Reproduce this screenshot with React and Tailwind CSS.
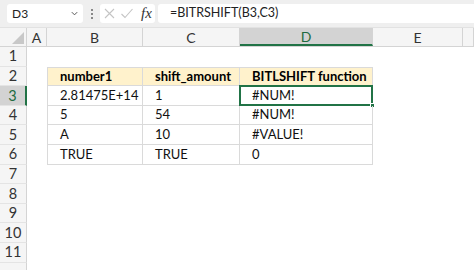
import React from 'react';

const cols = [
  { key: 'A', w: 'w-[20px]' },
  { key: 'B', w: 'w-[96px]' },
  { key: 'C', w: 'w-[97px]' },
  { key: 'D', w: 'w-[133px]' },
  { key: 'E', w: 'w-[90px]' },
  { key: 'F', w: 'flex-1' },
];

const table = [
  ['number1', 'shift_amount', 'BITLSHIFT function'],
  ['2.81475E+14', '1', '#NUM!'],
  ['5', '54', '#NUM!'],
  ['A', '10', '#VALUE!'],
  ['TRUE', 'TRUE', '0'],
];

function FormulaBar() {
  return (
    <div className="h-[28px] bg-[#efefef] flex items-center pl-[7px] border-b border-[#e2e2e2]">
      <div className="w-[76px] h-[19px] bg-white rounded-[3px] flex items-center justify-between pl-[5px] pr-[4px] text-[12px] text-[#222]">
        <span>D3</span>
        <svg width="9" height="9" viewBox="0 0 10 10">
          <path d="M2 3.5 L5 6.5 L8 3.5" fill="none" stroke="#555" strokeWidth="1.1" />
        </svg>
      </div>
      <div className="w-[17px] flex flex-col items-center justify-center gap-[2px]">
        <span className="w-[2px] h-[2px] bg-[#666] rounded-full"></span>
        <span className="w-[2px] h-[2px] bg-[#666] rounded-full"></span>
        <span className="w-[2px] h-[2px] bg-[#666] rounded-full"></span>
      </div>
      <div className="w-[55px] h-[19px] bg-white rounded-[3px] flex items-center pl-[3px] gap-[4px]">
        <svg width="13" height="13" viewBox="0 0 13 13">
          <path d="M2 2 L11 11 M11 2 L2 11" stroke="#c4c4c4" strokeWidth="1.1" fill="none" />
        </svg>
        <svg width="14" height="13" viewBox="0 0 14 13">
          <path d="M1.5 7 L5 10.5 L12.5 2" stroke="#c4c4c4" strokeWidth="1.1" fill="none" />
        </svg>
        <span className="ml-[3px] text-[15px] italic text-[#333]" style={{ fontFamily: '"Liberation Serif", serif' }}>fx</span>
      </div>
      <div className="ml-[3px] flex-1 h-[19px] bg-white rounded-l-[3px] flex items-center pl-[12px] text-[12.5px] text-[#222]">
        =BITRSHIFT(B3,C3)
      </div>
    </div>
  );
}

function ColHeader() {
  return (
    <div className="flex h-[19px] bg-[#f5f5f5] border-b border-[#d4d4d4]">
      <div className="w-[27px] border-r border-[#d4d4d4] flex items-end justify-end pr-[2px] pb-[2px]">
        <svg width="12" height="12" viewBox="0 0 12 12">
          <path d="M12 0 L12 12 L0 12 Z" fill="#c8c8c8" />
        </svg>
      </div>
      {cols.map((c) => (
        <div
          key={c.key}
          className={`${c.w} flex items-center justify-center border-r border-[#d4d4d4] text-[14px] ${
            c.key === 'D' ? 'bg-[#d3d3d3] text-[#1e6b40] border-b-2 border-b-[#217346]' : 'text-[#333]'
          }`}
        >
          {c.key === 'F' ? '' : c.key}
        </div>
      ))}
    </div>
  );
}

function Row({ n }) {
  const tableRow = n >= 2 && n <= 6 ? table[n - 2] : null;
  const isHead = n === 2;
  return (
    <div className="flex h-[19.6px]">
      <div
        className={`w-[27px] shrink-0 flex items-center justify-center text-[14.5px] border-r ${
          n === 3
            ? 'bg-[#d3d3d3] text-[#1e6b40] border-r-2 border-r-[#217346]'
            : 'bg-[#f5f5f5] text-[#333] border-[#d4d4d4]'
        } border-b border-b-[#e4e4e4]`}
      >
        {n <= 11 ? n : ''}
      </div>
      <div className="w-[20px] shrink-0"></div>
      {tableRow ? (
        tableRow.map((v, i) => (
          <div
            key={i}
            className={`${['w-[96px]', 'w-[97px]', 'w-[133px]'][i]} shrink-0 relative flex items-center pl-[12px] text-[13px] whitespace-nowrap border-r border-b border-[#dadada] ${
              i === 0 ? 'border-l' : ''
            } ${isHead ? 'border-t bg-[#fff2cc] font-bold text-black' : 'text-[#111]'}`}
          >
            {v}
            {n === 3 && i === 2 && (
              <div className="absolute -left-px -top-px -right-px -bottom-px border-2 border-[#217346]">
                <div className="absolute -right-[4px] -bottom-[4px] w-[5px] h-[5px] bg-[#217346] border border-white"></div>
              </div>
            )}
          </div>
        ))
      ) : null}
    </div>
  );
}

export default function App() {
  return (
    <div
      className="w-[474px] h-[270px] overflow-hidden bg-white"
      style={{ fontFamily: 'Lato, "Noto Sans", sans-serif' }}
    >
      <FormulaBar />
      <ColHeader />
      {[1, 2, 3, 4, 5, 6, 7, 8, 9, 10, 11, 12].map((n) => (
        <Row key={n} n={n} />
      ))}
    </div>
  );
}
